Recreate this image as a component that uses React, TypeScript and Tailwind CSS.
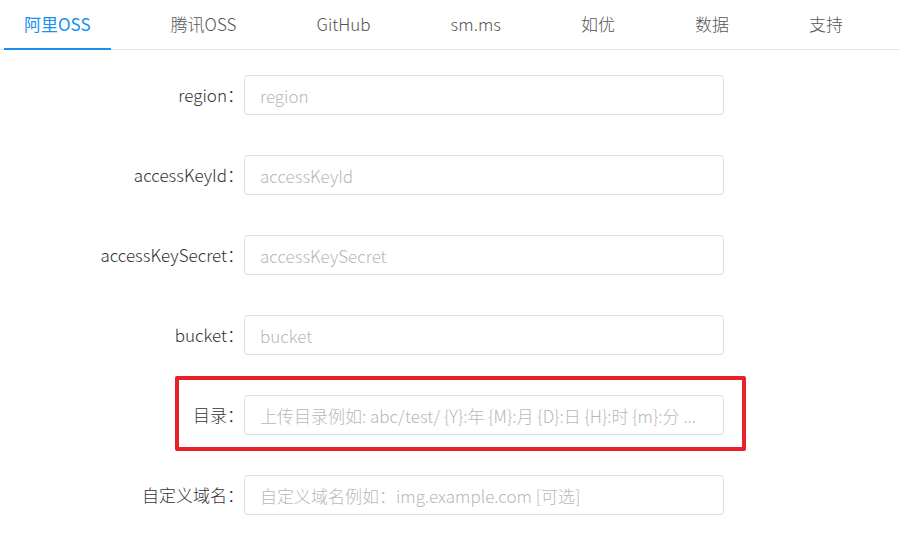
import { useState } from 'react';

const tabs = ['阿里OSS', '腾讯OSS', 'GitHub', 'sm.ms', '如优', '数据', '支持'];

const fields = [
  { label: 'region', placeholder: 'region' },
  { label: 'accessKeyId', placeholder: 'accessKeyId' },
  { label: 'accessKeySecret', placeholder: 'accessKeySecret' },
  { label: 'bucket', placeholder: 'bucket' },
  { label: '目录', placeholder: '上传目录例如: abc/test/ {Y}:年 {M}:月 {D}:日 {H}:时 {m}:分 ...', mark: true },
  { label: '自定义域名', placeholder: '自定义域名例如：img.example.com [可选]' },
];

export default function App() {
  const [active, setActive] = useState(0);

  return (
    <div className="w-[900px] h-[541px] bg-white overflow-hidden font-['Noto_Sans_CJK_SC',sans-serif] font-light">
      {/* tabs */}
      <div className="flex gap-10 pl-1 h-[50px] border-b border-[#e4e7ed]">
        {tabs.map((tab, i) => (
          <button
            key={tab}
            onClick={() => setActive(i)}
            className={`px-5 h-[50px] text-[17px] ${
              active === i
                ? 'text-[#1a90f0] border-b-2 border-[#1a90f0] font-normal'
                : 'text-[#555] border-b-2 border-transparent'
            }`}
          >
            {tab}
          </button>
        ))}
      </div>

      {/* form */}
      <div className="flex flex-col gap-10 pt-[25px]">
        {fields.map((f) => (
          <div key={f.label} className="relative flex items-center">
            <label className="w-[244px] text-right text-[17px] text-[#333]">
              {f.label}：
            </label>
            <input
              placeholder={f.placeholder}
              className="w-[480px] h-10 px-[15px] text-[17px] font-light border border-[#dcdfe6] rounded-[4px] placeholder:text-[#b8b8b8] outline-none"
            />
            {f.mark && (
              <div className="absolute left-[175px] top-[-19px] w-[571px] h-[75px] border-4 border-[#e8202a] rounded-[2px] pointer-events-none" />
            )}
          </div>
        ))}
      </div>
    </div>
  );
}
